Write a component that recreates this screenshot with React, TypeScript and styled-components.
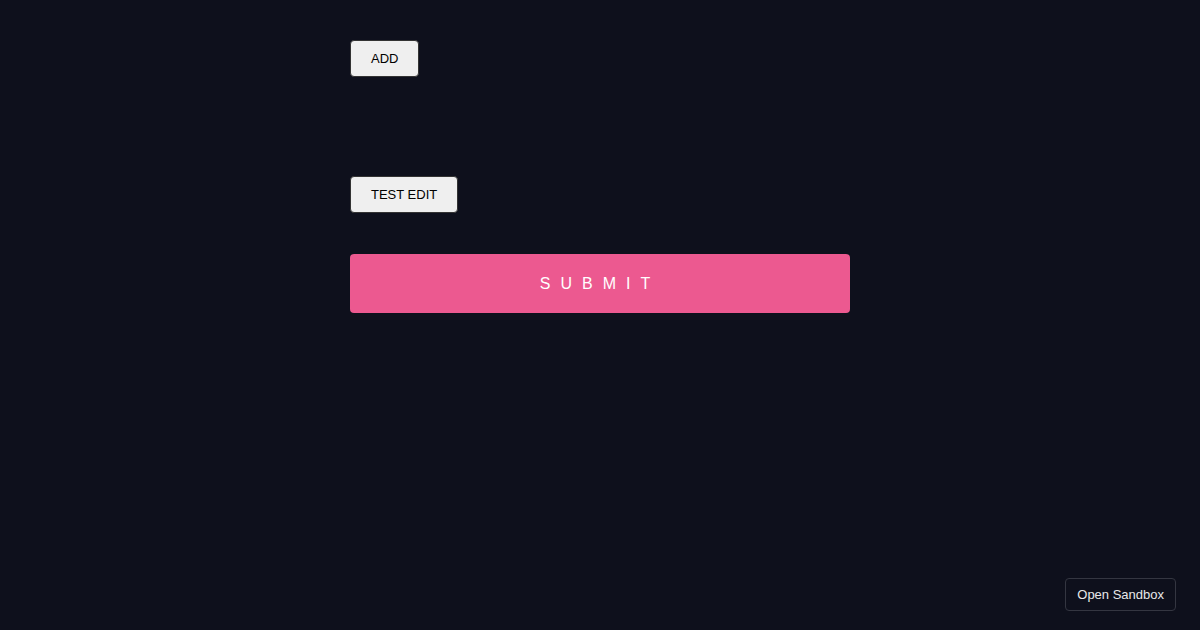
import * as React from "react"
import styled, { createGlobalStyle } from "styled-components"

const GlobalStyle = createGlobalStyle`
  html, body {
    margin: 0;
    padding: 0;
    height: 100%;
    background: #0e101c;
  }
  #root {
    min-height: 100%;
  }
`

const Page = styled.div`
  min-height: 630px;
  background: #0e101c;
  font-family: "Liberation Sans", Arial, sans-serif;
`

const Form = styled.form`
  width: 500px;
  margin: 0 auto;
  padding-top: 40px;
  display: flex;
  flex-direction: column;
  align-items: flex-start;
`

const Plain = styled.button`
  box-sizing: border-box;
  height: 37px;
  padding: 0 20px;
  background: #efefef;
  color: #000;
  border: 1px solid #333;
  border-radius: 4px;
  font-family: "Liberation Sans", Arial, sans-serif;
  font-size: 13px;
  text-transform: uppercase;
  cursor: pointer;
`

const Spacer = styled.div`
  height: 99px;
`

const Submit = styled.button`
  margin-top: 41px;
  width: 500px;
  height: 59px;
  padding-top: 1px;
  background: #ec5990;
  color: #fff;
  border: none;
  border-radius: 4px;
  font-family: "Liberation Sans", Arial, sans-serif;
  font-size: 16px;
  font-weight: 100;
  letter-spacing: 10px;
  text-transform: uppercase;
  cursor: pointer;
`

const SandboxLink = styled.a`
  position: fixed;
  right: 24px;
  bottom: 19px;
  box-sizing: border-box;
  height: 33px;
  padding: 0 11px;
  display: flex;
  align-items: center;
  border: 1px solid #343641;
  border-radius: 4px;
  background: #0e101c;
  color: #e8e8ea;
  font-family: "Liberation Sans", Arial, sans-serif;
  font-size: 13px;
  text-decoration: none;
`

export default function App() {
  return (
    <Page>
      <GlobalStyle />
      <Form onSubmit={(e) => e.preventDefault()}>
        <Plain type="button">Add</Plain>
        <Spacer />
        <Plain type="button">Test Edit</Plain>
        <Submit type="submit">Submit</Submit>
      </Form>
      <SandboxLink href="#">Open Sandbox</SandboxLink>
    </Page>
  )
}
